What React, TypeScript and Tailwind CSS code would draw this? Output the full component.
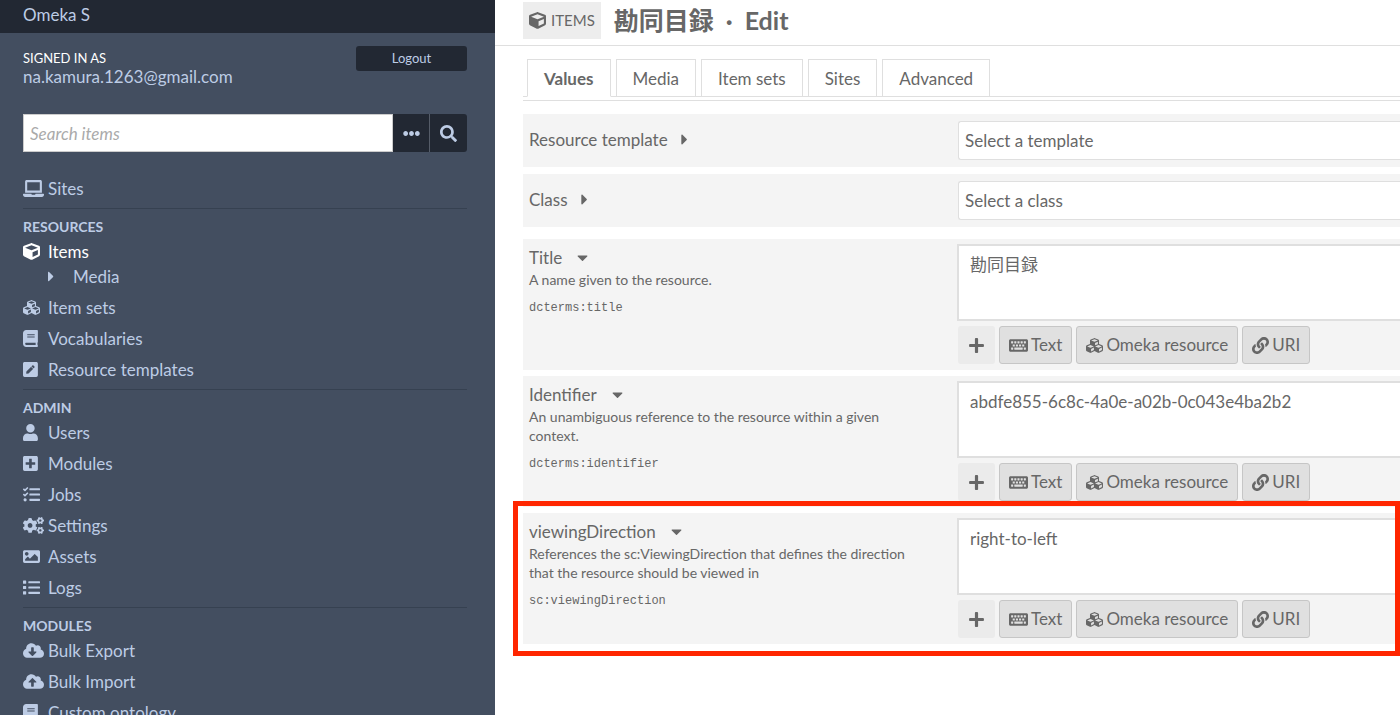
import type { ReactNode } from "react";
import type { IconType } from "react-icons";
import {
  FaBook,
  FaCaretDown,
  FaCaretRight,
  FaCloudDownloadAlt,
  FaCloudUploadAlt,
  FaCogs,
  FaCube,
  FaCubes,
  FaEllipsisH,
  FaImage,
  FaKeyboard,
  FaLaptop,
  FaLink,
  FaList,
  FaPenSquare,
  FaPlus,
  FaPlusSquare,
  FaSearch,
  FaTasks,
  FaUser,
} from "react-icons/fa";

type NavEntry = { label: string; icon: IconType; active?: boolean; child?: string };

const sections: { heading: string; entries: NavEntry[] }[] = [
  {
    heading: "Resources",
    entries: [
      { label: "Items", icon: FaCube, active: true, child: "Media" },
      { label: "Item sets", icon: FaCubes },
      { label: "Vocabularies", icon: FaBook },
      { label: "Resource templates", icon: FaPenSquare },
    ],
  },
  {
    heading: "Admin",
    entries: [
      { label: "Users", icon: FaUser },
      { label: "Modules", icon: FaPlusSquare },
      { label: "Jobs", icon: FaTasks },
      { label: "Settings", icon: FaCogs },
      { label: "Assets", icon: FaImage },
      { label: "Logs", icon: FaList },
    ],
  },
  {
    heading: "Modules",
    entries: [
      { label: "Bulk Export", icon: FaCloudDownloadAlt },
      { label: "Bulk Import", icon: FaCloudUploadAlt },
      { label: "Custom ontology", icon: FaBook },
    ],
  },
];

const tabs = ["Values", "Media", "Item sets", "Sites", "Advanced"];

const properties = [
  {
    label: "Title",
    description: "A name given to the resource.",
    term: "dcterms:title",
    value: "勘同目録",
  },
  {
    label: "Identifier",
    description: "An unambiguous reference to the resource within a given context.",
    term: "dcterms:identifier",
    value: "abdfe855-6c8c-4a0e-a02b-0c043e4ba2b2",
  },
  {
    label: "viewingDirection",
    description:
      "References the sc:ViewingDirection that defines the direction that the resource should be viewed in",
    term: "sc:viewingDirection",
    value: "right-to-left",
    highlighted: true,
  },
];

function NavLink({ label, icon: Icon, active }: NavEntry) {
  return (
    <a href="#" className={`flex h-[25px] items-center ${active ? "text-white" : ""}`}>
      {/* icons differ in width, so they share a box and hug its left edge */}
      <Icon preserveAspectRatio="xMinYMid" className="mr-1 h-[17px] w-[21px] shrink-0" />
      {label}
    </a>
  );
}

function Sidebar() {
  return (
    <aside className="h-screen w-[495px] shrink-0 overflow-hidden bg-[#434e60] text-[#bdcce5]">
      <div className="h-[33px] bg-[#222833] px-[23px] leading-[30px]">
        <a href="#">Omeka S</a>
      </div>
      <div className="flex justify-between pt-[13px] pr-7 pl-[23px]">
        <div className="pt-[3px]">
          <p className="text-[13px] leading-[18px] text-white uppercase">Signed in as</p>
          <a href="#" className="block leading-[20px]">
            na.kamura.1263@gmail.com
          </a>
        </div>
        <button className="h-[25px] w-[111px] rounded-[3px] bg-[#222833] text-[13px]">Logout</button>
      </div>
      <form className="mt-[27px] mr-7 ml-[23px] flex h-[38px]">
        <input
          type="text"
          aria-label="Search items"
          placeholder="Search items"
          className="min-w-0 flex-1 border border-[#ccc] bg-white px-[6px] pt-[2px] text-[#666] placeholder:text-[#aaa] placeholder:italic"
        />
        <button type="button" aria-label="Advanced search" className="flex w-[37px] items-center justify-center border-r border-[#555c68] bg-[#222833]">
          <FaEllipsisH size={17} />
        </button>
        <button type="button" aria-label="Search" className="flex w-[37px] items-center justify-center rounded-r-[3px] bg-[#222833]">
          <FaSearch size={17} />
        </button>
      </form>
      <nav className="mt-6 mr-7 ml-[23px]">
        <div className="pb-[7px]">
          <NavLink label="Sites" icon={FaLaptop} />
        </div>
        {sections.map((section) => (
          <div key={section.heading} className="border-t border-[#364151] pt-[5px] pb-px">
            <h4 className="text-[14px] leading-[25px] font-bold uppercase">{section.heading}</h4>
            <ul>
              {section.entries.map((entry) => (
                <li key={entry.label} className="pb-[6px]">
                  <NavLink {...entry} />
                  {entry.child && (
                    <a href="#" className="flex h-[25px] items-center pl-[25px]">
                      <FaCaretRight size={17} className="mr-[19px] w-[6px]" />
                      {entry.child}
                    </a>
                  )}
                </li>
              ))}
            </ul>
          </div>
        ))}
      </nav>
    </aside>
  );
}

function Tabs() {
  return (
    <div className="border-b border-[#dfdfdf] pb-[3px]">
      <div className="flex">
        <span className="w-1 border-b border-[#dfdfdf]" />
        {tabs.map((tab, i) => (
          <div key={tab} className="flex">
            <button
              className={`h-[38px] border border-[#dfdfdf] px-4 pt-[2px] ${i === 0 ? "border-b-white font-bold" : ""}`}
            >
              {tab}
            </button>
            {i < tabs.length - 1 && <span className="w-[5px] border-b border-[#dfdfdf]" />}
          </div>
        ))}
        <span className="flex-1 border-b border-[#dfdfdf]" />
      </div>
    </div>
  );
}

function SelectField({ id, label, placeholder }: { id: string; label: string; placeholder: string }) {
  return (
    <div className="flex h-[53px] bg-[#f4f4f4] pt-[7px]">
      <div className="flex h-[37px] w-[435px] shrink-0 items-center pl-[6px]">
        <label htmlFor={id}>{label}</label>
        <button aria-label={`${label} help`} className="ml-[13px]">
          <FaCaretRight size={17} className="w-[7px]" />
        </button>
      </div>
      <select
        id={id}
        className="h-[39px] min-w-0 flex-1 appearance-none rounded-l-[3px] border border-r-0 border-[#dfdfdf] bg-white px-[6px]"
      >
        <option>{placeholder}</option>
      </select>
    </div>
  );
}

function AddButton({ icon: Icon, wide, children }: { icon: IconType; wide?: boolean; children: ReactNode }) {
  return (
    <button className="flex h-[38px] items-center gap-[3px] rounded-[3px] border border-[#c6c6c6] bg-[#e0e0e0] px-[9px]">
      <Icon className={wide ? "h-[17px] w-[19px]" : "h-[17px] w-[17px]"} />
      {children}
    </button>
  );
}

function PropertyField({ label, description, term, value, highlighted }: (typeof properties)[number]) {
  return (
    <div className="relative flex h-[131px] bg-[#f4f4f4] pt-[5px]">
      <div className="w-[434px] shrink-0 pt-px pr-10 pl-[6px]">
        <div className="flex h-[25px] items-center">
          <label htmlFor={term}>{label}</label>
          <button aria-label={`${label} details`} className="ml-3">
            <FaCaretDown size={17} />
          </button>
        </div>
        <p className="text-[14px] leading-[19px]">{description}</p>
        <p className="mt-[10px] font-['Liberation_Mono',monospace] text-[12px] leading-[19px]">{term}</p>
      </div>
      <div className="min-w-0 flex-1">
        <textarea
          id={term}
          defaultValue={value}
          className="block h-[77px] w-full resize-none border-2 border-r-0 border-[#dfdfdf] bg-white px-[11px] py-[6px] leading-[25px]"
        />
        <div className="mt-[5px] ml-px flex gap-1">
          <button aria-label="Add value" className="flex h-[38px] w-[37px] items-center justify-center rounded-[3px] bg-[#ebebeb]">
            <FaPlus size={17} />
          </button>
          <AddButton icon={FaKeyboard} wide>
            Text
          </AddButton>
          <AddButton icon={FaCubes}>Omeka resource</AddButton>
          <AddButton icon={FaLink}>URI</AddButton>
        </div>
      </div>
      {highlighted && (
        <div className="pointer-events-none absolute -top-3 right-0 -bottom-3 -left-[10px] border-[5px] border-[#ff2600]" />
      )}
    </div>
  );
}

export default function App() {
  return (
    <div className="flex h-screen overflow-hidden bg-white font-['Lato','Noto_Sans_CJK_JP',sans-serif] text-[17px] text-[#676767]">
      <Sidebar />
      <main className="min-w-0 flex-1">
        <header className="flex h-[46px] items-start border-b border-[#dfdfdf] pt-[2px] pl-7">
          <a href="#" className="flex h-[37px] items-center gap-[5px] bg-[#ededed] px-[6px] text-[15px] uppercase">
            <FaCube size={17} />
            Items
          </a>
          <h1 className="ml-[13px] flex gap-3 text-[25px] leading-[37px] font-bold">
            <span>勘同目録</span>
            <span>·</span>
            <span>Edit</span>
          </h1>
        </header>
        <div className="pt-[13px] pl-7">
          <Tabs />
          <div className="mt-[13px] flex flex-col gap-[7px]">
            <SelectField id="template" label="Resource template" placeholder="Select a template" />
            <SelectField id="class" label="Class" placeholder="Select a class" />
          </div>
          <div className="mt-3 flex flex-col gap-[6px]">
            {properties.map((property) => (
              <PropertyField key={property.term} {...property} />
            ))}
          </div>
        </div>
      </main>
    </div>
  );
}
